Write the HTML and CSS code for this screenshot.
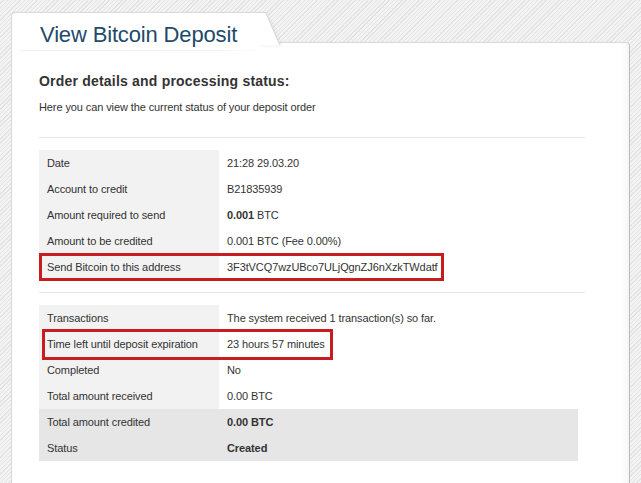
FILE: index.html
```html
<!DOCTYPE html>
<html lang="en">
<head>
<meta charset="utf-8">
<title>View Bitcoin Deposit</title>
<link rel="stylesheet" href="styles.css">
</head>
<body>
<div class="panel">
  <div class="tab"><h1 class="title">View Bitcoin Deposit</h1></div>
  <div class="box">
    <div class="title-rule"></div>
    <div class="content">
      <h2 class="heading">Order details and processing status:</h2>
      <p class="intro">Here you can view the current status of your deposit order</p>
      <div class="rule rule-first"></div>
      <div class="table-wrap">
        <table class="details">
          <tr><td class="label">Date</td><td class="value">21:28 29.03.20</td></tr>
          <tr><td class="label">Account to credit</td><td class="value">B21835939</td></tr>
          <tr><td class="label">Amount required to send</td><td class="value"><b>0.001</b> BTC</td></tr>
          <tr><td class="label">Amount to be credited</td><td class="value">0.001 BTC (Fee 0.00%)</td></tr>
          <tr><td class="label">Send Bitcoin to this address</td><td class="value">3F3tVCQ7wzUBco7ULjQgnZJ6nXzkTWdatf</td></tr>
        </table>
        <div class="mark mark-address"></div>
      </div>
      <div class="rule rule-second"></div>
      <div class="table-wrap">
        <table class="details">
          <tr><td class="label">Transactions</td><td class="value">The system received 1 transaction(s) so far.</td></tr>
          <tr><td class="label">Time left until deposit expiration</td><td class="value">23 hours 57 minutes</td></tr>
          <tr><td class="label">Completed</td><td class="value">No</td></tr>
          <tr><td class="label">Total amount received</td><td class="value">0.00 BTC</td></tr>
          <tr class="shaded"><td class="label">Total amount credited</td><td class="value"><b>0.00 BTC</b></td></tr>
          <tr class="shaded"><td class="label">Status</td><td class="value"><b>Created</b></td></tr>
        </table>
        <div class="mark mark-time"></div>
      </div>
    </div>
  </div>
</div>
</body>
</html>
```

FILE: styles.css
```css
html, body {
  margin: 0;
  padding: 0;
}
body {
  font-family: "Liberation Sans", Arial, sans-serif;
  color: #333;
  background-color: #f1f1f1;
  background-image: repeating-linear-gradient(135deg, #f3f3f3 0px, #f3f3f3 2px, #e3e3e3 2px, #e3e3e3 3px);
  overflow: hidden;
  height: 483px;
}
.panel {
  margin: 12px 0 0 11px;
  width: 619px;
}
.tab {
  position: relative;
  z-index: 2;
  width: 253px;
  height: 30px;
  margin-bottom: -1px;
  background: #fff;
  border-top: 1px solid #d9d9d9;
  border-left: 1px solid #d9d9d9;
  border-radius: 4px 0 0 0;
}
.tab::after {
  content: "";
  position: absolute;
  top: -1px;
  left: 232px;
  width: 21px;
  height: 32px;
  background: #fff;
  border-top: 1px solid #d9d9d9;
  border-right: 1px solid #d2d2d2;
  transform: skewX(23.4deg);
  transform-origin: top left;
  box-shadow: 2px 2px 3px rgba(0, 0, 0, 0.04);
}
.title {
  position: relative;
  z-index: 3;
  margin: 0;
  padding: 9px 0 0 28px;
  font-size: 22px;
  line-height: 26px;
  font-weight: normal;
  letter-spacing: -0.15px;
  color: #1e4b6b;
  white-space: nowrap;
}
.box {
  position: relative;
  z-index: 1;
  height: 520px;
  background: #fff;
  border: 1px solid #d9d9d9;
  border-right-color: #bcbcbc;
  border-radius: 0 4px 0 0;
  box-shadow: inset -8px 0 8px -6px rgba(0, 0, 0, 0.06);
}
.title-rule {
  margin: 7px 0 0 8px;
  width: 250px;
  height: 1px;
  background: linear-gradient(90deg, #f0f0f0, #f4f4f4 80%, rgba(244, 244, 244, 0));
}
.content {
  padding: 0 44px 0 27px;
}
.heading {
  margin: 21px 0 0;
  font-size: 14px;
  line-height: 18px;
  font-weight: bold;
  letter-spacing: 0.2px;
  color: #333;
}
.intro {
  margin: 10px 0 0;
  font-size: 11px;
  line-height: 14px;
  letter-spacing: -0.1px;
  color: #333;
}
.rule {
  height: 1px;
  background: #e6e6e6;
}
.rule-first {
  margin-top: 23px;
}
.rule-second {
  margin-top: 12px;
}
.table-wrap {
  position: relative;
  margin-top: 12px;
  width: 539px;
}
.details {
  width: 539px;
  border-collapse: collapse;
  font-size: 11px;
  letter-spacing: -0.1px;
  color: #333;
}
.details td {
  height: 26px;
  padding: 0 8px;
  line-height: 14px;
  vertical-align: middle;
  white-space: nowrap;
}
.details .label {
  width: 164px;
  background: #f2f2f2;
}
.details .shaded td {
  background: #e6e6e6;
}
.mark {
  position: absolute;
  border: 3px solid #c81d20;
  box-sizing: border-box;
}
.mark-address {
  left: 0;
  top: 103px;
  width: 405px;
  height: 28px;
}
.mark-time {
  left: 3px;
  top: 24px;
  width: 291px;
  height: 31px;
}
```
